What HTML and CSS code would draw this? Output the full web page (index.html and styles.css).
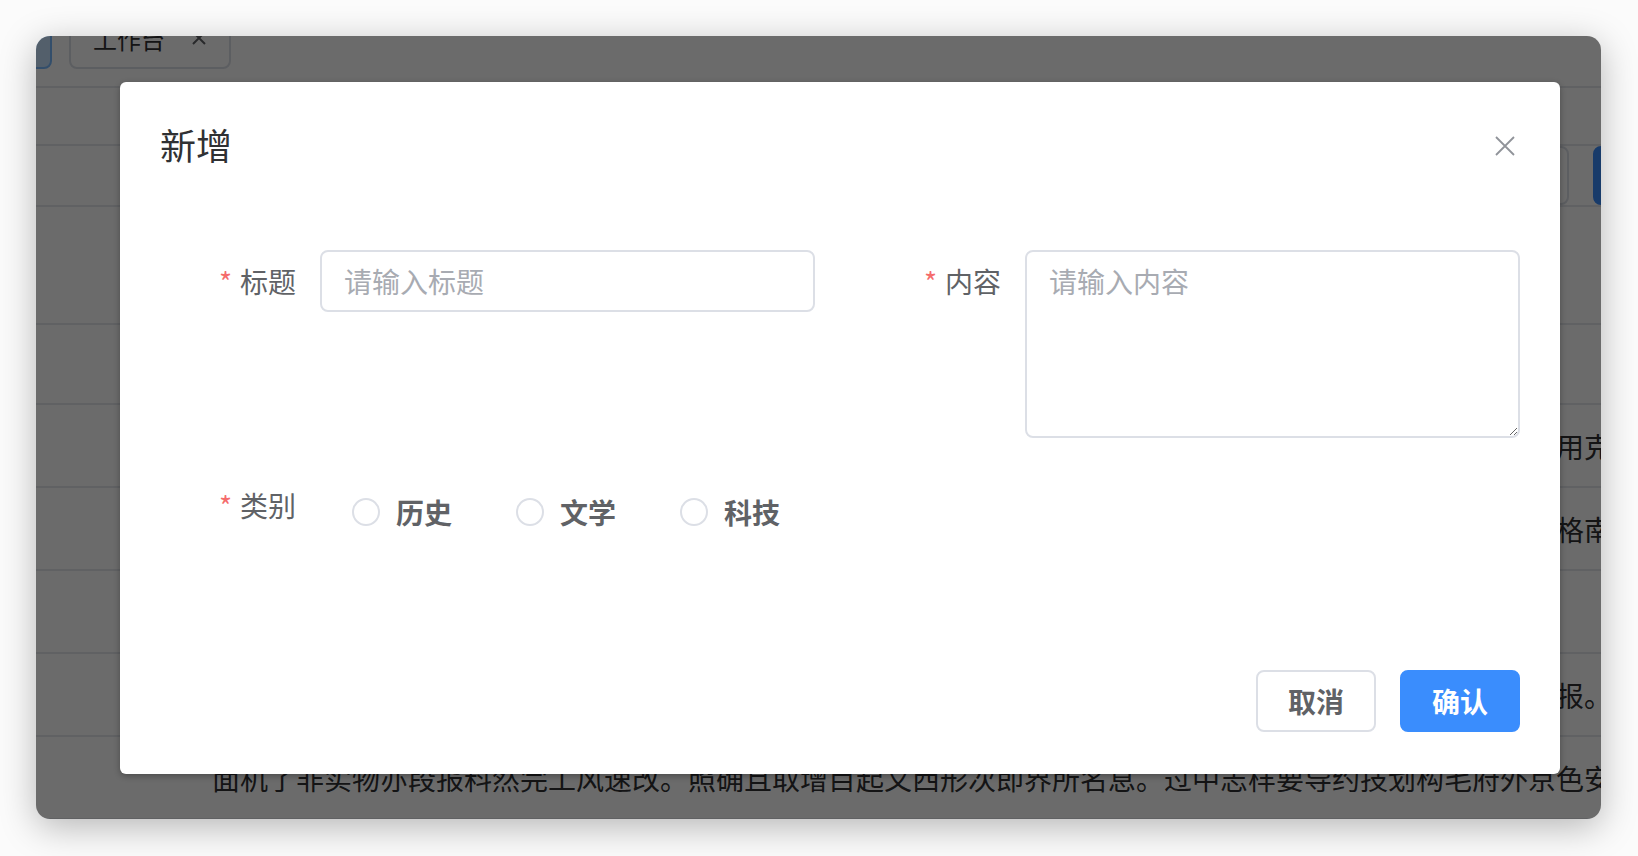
FILE: index.html
```html
<!DOCTYPE html>
<html lang="zh-CN">
<head>
    <meta charset="UTF-8">
    <meta name="viewport" content="width=device-width, initial-scale=1.0">
    <title>文章管理</title>
    <link rel="stylesheet" href="styles.css">
</head>
<body>
    <div class="screen">
        <div class="window">
            <div class="app">
                <div class="tabs">
                    <span class="tab tab-active"></span>
                    <span class="tab">工作台
                        <svg class="tab-close" width="16" height="16" viewBox="0 0 16 16"><path d="M2 2L14 14M14 2L2 14" stroke="currentColor" stroke-width="2" fill="none"/></svg>
                    </span>
                </div>
                <div class="crumb"></div>
                <div class="toolbar">
                    <div class="toolbar-actions">
                        <button class="btn" type="button"></button>
                        <button class="btn btn-primary" type="button"></button>
                    </div>
                </div>
                <div class="table-head"></div>
                <div class="table-row table-row-first"></div>
                <div class="table-row">据类强思信构物料究收象省团建记。派离打被整存连值华基级声调压劳。合清议断素快开光达引往接集写社。用克争青听马</div>
                <div class="table-row">派离打被整存连值华基级声调压劳。合清议断素快开光达引往接集写社。据类强思信构物料究收象省团建记。格南调片流石</div>
                <div class="table-row"></div>
                <div class="table-row">合清议断素快开光达引往接集写社。据类强思信构物料究收象省团建记。派离打被整存连值华基级声调压劳。报。</div>
                <div class="table-row">面机了非实物亦段报料然完工风速改。照确且取增目起又西形次即界所名息。过中志样要导约技划构毛府外京色安</div>
            </div>

            <div class="overlay">
                <div class="dialog">
                    <header class="dialog-header">
                        <span class="dialog-title">新增</span>
                        <button class="dialog-close" type="button">
                            <svg width="20" height="20" viewBox="0 0 20 20"><path d="M1 1L19 19M19 1L1 19" stroke="currentColor" stroke-width="1.8" fill="none"/></svg>
                        </button>
                    </header>
                    <form class="dialog-body">
                        <div class="form-grid">
                            <div class="form-item">
                                <label class="form-label is-required">标题</label>
                                <input class="input" type="text" placeholder="请输入标题">
                            </div>
                            <div class="form-item">
                                <label class="form-label is-required">内容</label>
                                <textarea class="textarea" placeholder="请输入内容"></textarea>
                            </div>
                            <div class="form-item">
                                <label class="form-label is-required">类别</label>
                                <div class="radio-group">
                                    <label class="radio"><input class="radio-input" type="radio" name="type">历史</label>
                                    <label class="radio"><input class="radio-input" type="radio" name="type">文学</label>
                                    <label class="radio"><input class="radio-input" type="radio" name="type">科技</label>
                                </div>
                            </div>
                        </div>
                    </form>
                    <footer class="dialog-footer">
                        <button class="btn" type="button">取消</button>
                        <button class="btn btn-primary" type="button">确认</button>
                    </footer>
                </div>
            </div>
        </div>
    </div>
</body>
</html>
```

FILE: styles.css
```css
* {
    box-sizing: border-box;
}
body {
    margin: 0;
    background: #fbfbfb;
    font-family: "Noto Sans CJK SC", "Noto Sans", sans-serif;
}
.screen {
    height: 100vh;
    padding: 36px 37px 37px 36px;
}
.window {
    position: relative;
    height: 783px;
    border-radius: 14px;
    overflow: hidden;
    background: #fff;
    box-shadow: 0 8px 36px rgba(0, 0, 0, 0.28);
}

/* page behind the dialog */
.app {
    color: #303133;
}
.tabs {
    display: flex;
    align-items: flex-end;
    gap: 17px;
    height: 52px;
    padding-bottom: 17px;
    border-bottom: 2px solid #e4e7ed;
}
.tab {
    flex: none;
    display: flex;
    align-items: center;
    gap: 26px;
    height: 62px;
    padding: 0 22px;
    border: 2px solid #dcdfe6;
    border-radius: 8px;
    background: #fff;
    font-size: 24px;
}
.tab-active {
    width: 116px;
    margin-left: -100px;
    background: #c6e2ff;
    border-color: #79bbff;
}
.tab-close {
    color: #606266;
}
.crumb {
    height: 58px;
    border-bottom: 2px solid #e4e7ed;
}
.toolbar {
    display: flex;
    justify-content: flex-end;
    height: 61px;
    border-bottom: 2px solid #e4e7ed;
}
.toolbar-actions {
    display: flex;
    gap: 24px;
    margin-right: -112px;
}
.toolbar .btn {
    width: 120px;
    height: 59px;
}
.table-head {
    height: 118px;
    border-bottom: 2px solid #e4e7ed;
}
.table-row {
    display: flex;
    align-items: center;
    height: 83px;
    padding-left: 176px;
    border-bottom: 2px solid #e4e7ed;
    font-size: 28px;
    white-space: nowrap;
    overflow: hidden;
}
.table-row-first {
    height: 80px;
}

/* modal */
.overlay {
    position: absolute;
    inset: 0;
    background: rgba(0, 0, 0, 0.58);
}
.dialog {
    position: relative;
    width: 1440px;
    margin: 46px 0 0 84px;
    background: #fff;
    border-radius: 6px;
    box-shadow: 0 2px 6px rgba(0, 0, 0, 0.3);
}
.dialog-header {
    padding: 38px 40px 22px;
}
.dialog-title {
    font-size: 36px;
    line-height: 48px;
    color: #303133;
}
.dialog-close {
    position: absolute;
    top: 40px;
    right: 40px;
    width: 30px;
    height: 48px;
    display: flex;
    align-items: center;
    justify-content: center;
    padding: 0;
    border: none;
    background: none;
    color: #909399;
    cursor: pointer;
}
.dialog-body {
    margin: 0;
    padding: 60px 40px 0;
}
.form-grid {
    display: grid;
    grid-template-columns: 1fr 1fr;
    column-gap: 50px;
    row-gap: 36px;
}
.form-item {
    display: flex;
    align-items: flex-start;
}
.form-label {
    flex: none;
    width: 160px;
    padding-right: 24px;
    text-align: right;
    font-size: 28px;
    line-height: 62px;
    color: #606266;
}
.form-label.is-required::before {
    content: "*";
    margin-right: 8px;
    color: #f56c6c;
}
.input,
.textarea {
    flex: 1;
    min-width: 0;
    border: 2px solid #dcdfe6;
    border-radius: 8px;
    background: #fff;
    font-family: inherit;
    font-size: 28px;
    color: #606266;
    outline: none;
}
.input {
    height: 62px;
    padding: 0 22px;
}
.textarea {
    height: 188px;
    padding: 8px 22px;
    line-height: 42px;
    resize: vertical;
}
.input::placeholder,
.textarea::placeholder {
    color: #a8abb2;
}
.radio-group {
    display: flex;
    align-items: center;
    gap: 64px;
    height: 62px;
    padding-top: 14px;
    margin-left: 32px;
}
.radio {
    display: flex;
    align-items: center;
    gap: 16px;
    font-size: 28px;
    font-weight: 700;
    color: #606266;
    cursor: pointer;
}
.radio-input {
    appearance: none;
    width: 28px;
    height: 28px;
    margin: 0;
    border: 2px solid #dcdfe6;
    border-radius: 50%;
    background: #fff;
}
.dialog-footer {
    display: flex;
    justify-content: flex-end;
    gap: 24px;
    padding: 134px 40px 42px;
}
.btn {
    height: 62px;
    padding: 0 30px;
    border: 2px solid #dcdfe6;
    border-radius: 8px;
    background: #fff;
    font-family: inherit;
    font-size: 28px;
    font-weight: 700;
    color: #606266;
    cursor: pointer;
}
.btn-primary {
    background: #3a8dfd;
    border-color: #3a8dfd;
    color: #fff;
}
```
